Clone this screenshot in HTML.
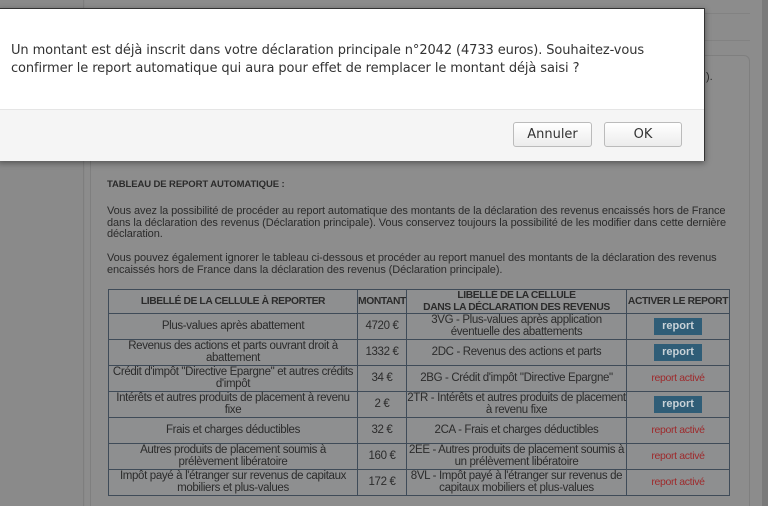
<!DOCTYPE html>
<html><head><meta charset="utf-8"><style>
*{margin:0;padding:0;box-sizing:border-box}
html,body{width:768px;height:506px;overflow:hidden}
body{background:#898989;font-family:"Liberation Sans",sans-serif;position:relative}
.lcol{position:absolute;left:0;top:0;width:84px;height:506px;background:#8a8a8a;border-right:1px solid #7e7e7e}
.main{position:absolute;left:85px;top:0;width:677px;height:506px;background:#8c8c8c}
.rstrip{position:absolute;left:762px;top:0;width:6px;height:506px;background:#7a7a7a}
.hline{position:absolute;left:85px;width:665px;height:1px;background:#828282}
.panel{position:absolute;left:90px;top:55px;width:660px;height:451px;border:1px solid #7f7f7f;border-bottom:none;border-radius:6px 6px 0 0;background:#8d8d8d}
.txt{position:absolute;left:107px;width:630px;font-size:11px;line-height:11.6px;color:#2b2b2b;letter-spacing:-0.1px;white-space:nowrap}
table{position:absolute;left:108px;top:289px;width:621px;table-layout:fixed;border-collapse:collapse;font-size:11.5px;letter-spacing:-0.35px;color:#2b2b2b;background:#8e8f90}
td,th{border:1.5px solid #3f4b58;text-align:center;line-height:11.5px;padding:0;white-space:nowrap;overflow:hidden}
th{font-weight:bold;font-size:10.3px;height:24px;letter-spacing:-0.4px}
td{height:26px}
.btn{display:inline-block;width:48px;height:17px;background:#2f5d77;color:#c8d2d8;font-weight:bold;font-size:11px;line-height:17px;letter-spacing:0}
.red{color:#9e2a2c;font-size:10.5px}
.dlg{position:absolute;left:-2px;top:8px;width:707px;height:153px;background:#fff;border:1px solid #333;box-shadow:0 2px 6px rgba(0,0,0,.4)}
.dlg p{position:absolute;left:12px;top:33px;font-family:"DejaVu Sans",sans-serif;font-size:13px;line-height:18px;color:#333;letter-spacing:-0.1px;white-space:nowrap}
.foot{position:absolute;left:0;top:100px;width:705px;height:52px;background:#f5f5f5;border-top:1px solid #e5e5e5}
.b{position:absolute;top:12px;height:25px;border:1px solid #bbb;border-radius:3px;background:linear-gradient(#fff,#ececec);font-family:"DejaVu Sans",sans-serif;font-size:13px;color:#333;text-align:center;line-height:23px}
</style></head><body>
<div class="lcol"></div>
<div class="main"></div>
<div class="rstrip"></div>
<div class="hline" style="top:13px"></div>
<div class="hline" style="top:40px"></div>
<div class="panel"></div>
<div class="txt" style="top:72px;left:706px;width:20px">).</div>
<div class="txt" style="top:179px;font-weight:bold;font-size:9.5px">TABLEAU DE REPORT AUTOMATIQUE :</div>
<div class="txt" style="top:206px">Vous avez la possibilité de procéder au report automatique des montants de la déclaration des revenus encaissés hors de France<br>dans la déclaration des revenus (Déclaration principale). Vous conservez toujours la possibilité de les modifier dans cette dernière<br>déclaration.</div>
<div class="txt" style="top:253px">Vous pouvez également ignorer le tableau ci-dessous et procéder au report manuel des montants de la déclaration des revenus<br>encaissés hors de France dans la déclaration des revenus (Déclaration principale).</div>
<table>
<colgroup><col style="width:249px"><col style="width:49px"><col style="width:220px"><col style="width:103px"></colgroup>
<tr><th>LIBELLÉ DE LA CELLULE À REPORTER</th><th>MONTANT</th><th>LIBELLÉ DE LA CELLULE<br>DANS LA DÉCLARATION DES REVENUS</th><th>ACTIVER LE REPORT</th></tr>
<tr><td>Plus-values après abattement</td><td>4720 €</td><td>3VG - Plus-values après application<br>éventuelle des abattements</td><td><span class="btn">report</span></td></tr>
<tr><td>Revenus des actions et parts ouvrant droit à<br>abattement</td><td>1332 €</td><td>2DC - Revenus des actions et parts</td><td><span class="btn">report</span></td></tr>
<tr><td>Crédit d'impôt "Directive Epargne" et autres crédits<br>d'impôt</td><td>34 €</td><td>2BG - Crédit d'impôt "Directive Epargne"</td><td class="red">report activé</td></tr>
<tr><td>Intérêts et autres produits de placement à revenu<br>fixe</td><td>2 €</td><td>2TR - Intérêts et autres produits de placement<br>à revenu fixe</td><td><span class="btn">report</span></td></tr>
<tr><td style="height:25px">Frais et charges déductibles</td><td>32 €</td><td>2CA - Frais et charges déductibles</td><td class="red">report activé</td></tr>
<tr><td style="height:25px">Autres produits de placement soumis à<br>prélèvement libératoire</td><td>160 €</td><td>2EE - Autres produits de placement soumis à<br>un prélèvement libératoire</td><td class="red">report activé</td></tr>
<tr><td>Impôt payé à l'étranger sur revenus de capitaux<br>mobiliers et plus-values</td><td>172 €</td><td>8VL - Impôt payé à l'étranger sur revenus de<br>capitaux mobiliers et plus-values</td><td class="red">report activé</td></tr>
</table>
<div class="dlg">
<p>Un montant est déjà inscrit dans votre déclaration principale n°2042 (4733 euros). Souhaitez-vous<br>confirmer le report automatique qui aura pour effet de remplacer le montant déjà saisi ?</p>
<div class="foot">
<div class="b" style="left:514px;width:79px">Annuler</div>
<div class="b" style="left:605px;width:78px">OK</div>
</div>
</div>
</body></html>
